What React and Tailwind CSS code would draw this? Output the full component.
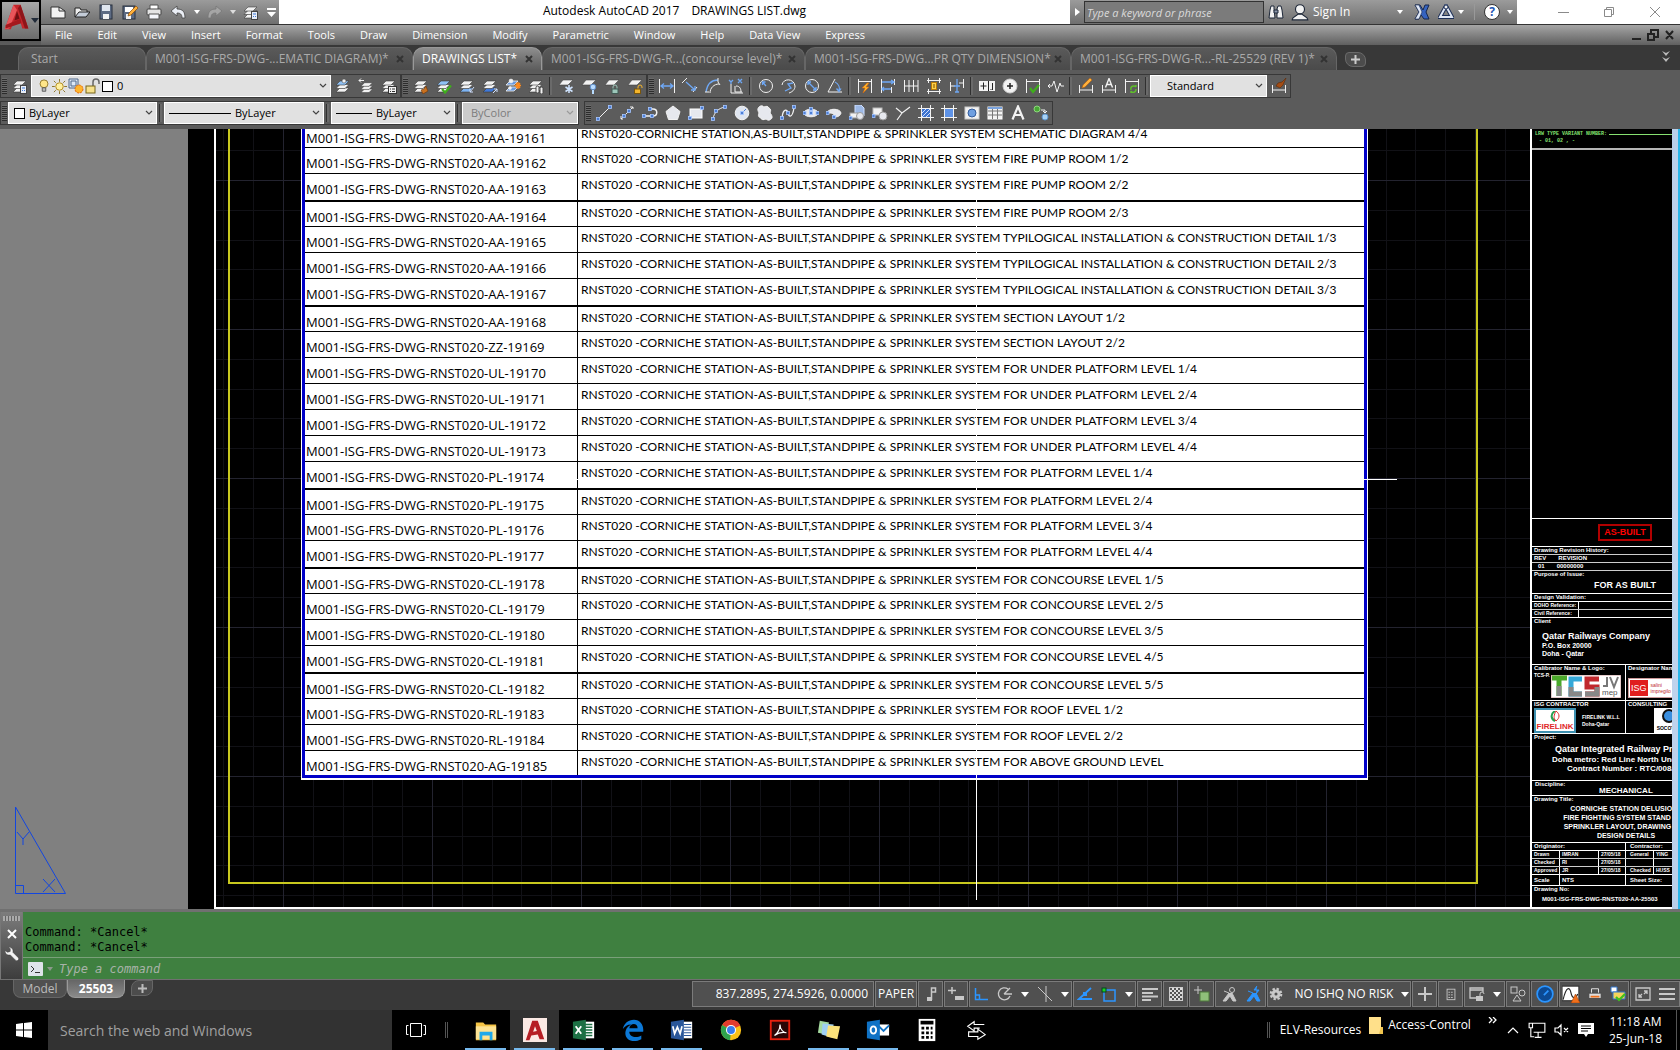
import { useState } from "react";

const menus = [
  "File", "Edit", "View", "Insert", "Format", "Tools", "Draw", "Dimension",
  "Modify", "Parametric", "Window", "Help", "Data View", "Express",
];

const fileTabs = [
  { name: "Start", width: "w-[128px]", pinned: true },
  { name: "M001-ISG-FRS-DWG-...EMATIC DIAGRAM)*", width: "w-[267px]" },
  { name: "DRAWINGS LIST*", width: "w-[129px]" },
  { name: "M001-ISG-FRS-DWG-R...(concourse level)*", width: "w-[263px]" },
  { name: "M001-ISG-FRS-DWG...PR QTY DIMENSION*", width: "w-[266px]" },
  { name: "M001-ISG-FRS-DWG-R...-RL-25529 (REV 1)*", width: "w-[266px]" },
];

const PREFIX = "RNST020 -CORNICHE STATION-AS-BUILT,STANDPIPE & SPRINKLER SYSTEM ";

// heavy marks the rows that close a group with a thicker rule
const drawings = [
  { no: "AA-19161", title: "RNST020-CORNICHE STATION,AS-BUILT,STANDPIPE & SPRINKLER SYSTEM SCHEMATIC DIAGRAM 4/4" },
  { no: "AA-19162", title: PREFIX + "FIRE PUMP ROOM 1/2" },
  { no: "AA-19163", title: PREFIX + "FIRE PUMP ROOM 2/2", heavy: true },
  { no: "AA-19164", title: PREFIX + "FIRE PUMP ROOM 2/3" },
  { no: "AA-19165", title: PREFIX + "TYPILOGICAL INSTALLATION & CONSTRUCTION DETAIL 1/3" },
  { no: "AA-19166", title: PREFIX + "TYPILOGICAL INSTALLATION & CONSTRUCTION DETAIL 2/3" },
  { no: "AA-19167", title: PREFIX + "TYPILOGICAL INSTALLATION & CONSTRUCTION DETAIL 3/3", heavy: true },
  { no: "AA-19168", title: PREFIX + "SECTION LAYOUT 1/2" },
  { no: "ZZ-19169", title: PREFIX + "SECTION LAYOUT 2/2" },
  { no: "UL-19170", title: PREFIX + "FOR UNDER PLATFORM LEVEL 1/4" },
  { no: "UL-19171", title: PREFIX + "FOR UNDER PLATFORM LEVEL 2/4" },
  { no: "UL-19172", title: PREFIX + "FOR UNDER PLATFORM LEVEL 3/4" },
  { no: "UL-19173", title: PREFIX + "FOR UNDER PLATFORM LEVEL 4/4" },
  { no: "PL-19174", title: PREFIX + "FOR PLATFORM LEVEL 1/4", heavy: true },
  { no: "PL-19175", title: PREFIX + "FOR PLATFORM LEVEL 2/4" },
  { no: "PL-19176", title: PREFIX + "FOR PLATFORM LEVEL 3/4" },
  { no: "PL-19177", title: PREFIX + "FOR PLATFORM LEVEL 4/4", heavy: true },
  { no: "CL-19178", title: PREFIX + "FOR CONCOURSE LEVEL 1/5" },
  { no: "CL-19179", title: PREFIX + "FOR CONCOURSE LEVEL 2/5" },
  { no: "CL-19180", title: PREFIX + "FOR CONCOURSE LEVEL 3/5" },
  { no: "CL-19181", title: PREFIX + "FOR CONCOURSE LEVEL 4/5", heavy: true },
  { no: "CL-19182", title: PREFIX + "FOR CONCOURSE LEVEL 5/5" },
  { no: "RL-19183", title: PREFIX + "FOR ROOF LEVEL 1/2" },
  { no: "RL-19184", title: PREFIX + "FOR ROOF LEVEL 2/2" },
  { no: "AG-19185", title: PREFIX + "FOR ABOVE GROUND LEVEL" },
];

/* ---------- ICON PIECES ---------- */

const W = "#f2f2f2";
const B = "#6fa8f5";

function Svg({ size = 16, children }) {
  return (
    <svg width={size} height={size} viewBox="0 0 16 16" fill="none" stroke={W} aria-hidden="true" className="shrink-0">
      {children}
    </svg>
  );
}

function Stack({ top = W, bottom = W }) {
  return (
    <g stroke="#3a3a3a" strokeWidth=".6">
      <path d="M5 10h9l-4 4H1z" fill={bottom} />
      <path d="M5 6.500h9l-4 4H1z" fill={W} />
      <path d="M5 3h9l-4 4H1z" fill={top} />
    </g>
  );
}

function Nodes({ at }) {
  return at.map(([x, y]) => (
    <rect key={x + "-" + y} x={x - 1.5} y={y - 1.5} width="3" height="3" fill="#4d7fd6" stroke="#a9c8ff" strokeWidth=".8" />
  ));
}

const HDim = () => <path d="M1.500 7v8M14.500 7v8M1.500 12h13" />;

const layerProps = (
  <>
    <Stack />
    <rect x="8.500" y="7.500" width="6" height="8" fill="#e8eef8" stroke="#444" />
    <path d="M10 10h3M10 12.500h1M12 12.500h1" stroke="#3b78d8" />
  </>
);

const layerTools = [
  ["Make object's layer current", <><Stack top="#8fc1f5" /><circle cx="9" cy="3" r="2" fill={W} stroke="#444" strokeWidth=".5" /></>],
  ["Layer previous", <><g transform="translate(2 2) scale(.9)"><Stack /></g><path d="M6 2.500H1M3 .5l-2 2 2 2" /></>],
  ["Layer states manager", <><Stack /><rect x="7.500" y="8.500" width="8" height="7" fill={W} stroke="#333" /><path d="M9 11h1M11 11h3M9 13.500h1M11 13.500h3" stroke="#333" /></>],
];

const layerTools2 = [
  ["Match layer", <><Stack /><path d="M13 8l-2 3-3 1 2 4 5-3-1-2z" fill="#c8701e" stroke="#6b3408" strokeWidth=".6" /></>],
  ["Layer current", <><Stack top="#8fc1f5" /><path d="M6 11l3 3.500 6-7" stroke="#3fae1c" strokeWidth="2.200" /></>],
  ["Layer isolate", <><Stack bottom="#7db2f0" /><path d="M15 9l-4 5M11 11v3h3" stroke="#cfe0ff" /></>],
  ["Layer unisolate", <><Stack bottom="#3f78d8" /><path d="M11 15l4-4M12 11h3v3" stroke="#cfe0ff" /></>],
  ["Layer freeze viewport", <><path d="M5 3h8l-4 4H1zM5 9h8l-4 4H1z" fill="#6a9be0" stroke={W} strokeWidth=".8" /><circle cx="6" cy="3" r="2" fill={W} strokeWidth=".5" /><circle cx="5" cy="10" r="1.500" fill={W} strokeWidth=".5" /><path d="M13 4v7M9.500 7.500h7M11 5l4 5M15 5l-4 5" stroke="#ff8a1c" strokeWidth="1.300" /></>],
  ["Layer walk", <><Stack /><rect x="8" y="8" width="3" height="7" rx="1.500" fill={W} stroke="#444" /><rect x="12" y="9" width="3" height="7" rx="1.500" fill={W} stroke="#444" /></>],
];

const flat = <path d="M5 2h10l-5 5H1z" fill={W} stroke="#444" strokeWidth=".6" />;
const layerTools3 = [
  ["Layer freeze", <>{flat}<path d="M11 7v8M7.500 9l7 4.500M14.500 9l-7 4.500" stroke="#cfe4ff" strokeWidth="1.500" /></>],
  ["Layer off", <>{flat}<circle cx="12" cy="9" r="2.800" fill="#b9dcff" stroke="#5d8cc9" /><path d="M12 12v4" stroke="#b9dcff" strokeWidth="2" /></>],
  ["Layer lock", <>{flat}<path d="M9 11V9a2 2 0 014 0v2" stroke="#9cc7ba" /><rect x="8" y="11" width="6" height="4.500" fill="#9cc7ba" stroke="#415b54" /></>],
  ["Layer unlock", <>{flat}<path d="M11 11V9a2 2 0 014 0v1" stroke="#f4b52c" /><rect x="7.500" y="11" width="6" height="4.500" fill="#f4b52c" stroke="#7b560b" /></>],
];

const dimTools = [
  ["Linear", <><path d="M.5 1v14M15.500 1v14" /><path d="M2 8h12M5 5.500L2 8l3 2.500M11 5.500L14 8l-3 2.500" stroke={B} strokeWidth="1.300" /></>],
  ["Aligned", <><path d="M5 0L0 5M15 9l-4 5" /><path d="M4 4l9 8M13 8v4H9" stroke={B} strokeWidth="1.300" /></>],
  ["Arc length", <><path d="M5 15c0-5 4-9 9-9" /><path d="M1 14C2 7 6 2 13 2" stroke={B} strokeWidth="1.300" /><path d="M0 14h4M13 0v4M13 4l2 3" /></>],
  ["Ordinate", <><path d="M3 6v9h12M7 8v6h7M8 8c4 0 5 3 5 6" /><path d="M10 1l4 4M14 1l-4 4M1 2l2 2 2-2M3 4v2" stroke={B} strokeWidth="1.300" /></>],
];
const dimTools2 = [
  ["Radius", <><circle cx="8" cy="8" r="6.500" /><path d="M8 8L4.500 4M4.500 7V4h3" stroke={B} strokeWidth="1.300" /></>],
  ["Jogged", <><path d="M1 7c1-7 12-7 13 1 0 4-3 6-6 7" /><path d="M12 5L7 6l3 4-6 3" stroke={B} strokeWidth="1.300" /></>],
  ["Diameter", <><circle cx="8" cy="8" r="6.500" /><path d="M4 4l8 8M4 7V4h3M12 9v3H9" stroke={B} strokeWidth="1.300" /></>],
  ["Angular", <><path d="M8 1L1 14h14" /><path d="M8 4c4 2 5 6 4 9M9.500 10.500l2.500 3 2-3" stroke={B} strokeWidth="1.300" /></>],
];
const dimTools3 = [
  ["Quick dimension", <><path d="M1.500 1v14M14.500 1v14M1 3.500h14" /><path d="M10 5L5 10h3l-2 5 6-6H9l3-4z" fill="#ffb52c" stroke="#d5660c" strokeWidth=".6" /></>],
  ["Baseline", <><path d="M1.500 1v14M11.500 9v6M14.500 1v6" /><path d="M2 4h12M2 11h9M11 2l3 2-3 2M4 9l-2 2 2 2" stroke={B} strokeWidth="1.300" /></>],
  ["Continue", <path d="M1.500 2v12M6 2v12M10.500 2v12M15 2v12M1 8h14" />],
  ["Dimension space", <><path d="M1 2.500h14M1 13.500h14M2.500 0v5M13.500 0v5M2.500 11v5M13.500 11v5" /><rect x="5.500" y="4.500" width="5" height="7" fill="#ffd24a" stroke="#b97a05" /><path d="M8 6v4" stroke="#7a4c00" /></>],
  ["Dimension break", <><path d="M1.500 4v9M14.500 1v9M2 8h4M10 5h4" /><path d="M8 1v13M5 8h6M6 14h4" stroke={B} strokeWidth="1.300" /></>],
];
const dimTools4 = [
  ["Tolerance", <><rect x="0" y="3" width="16" height="10" fill={W} stroke="none" /><path d="M4.500 4.500v7M1.500 8h6M9.500 3v10M12 11v1M13.500 5v7" stroke="#222" /></>],
  ["Center mark", <><circle cx="8" cy="8" r="7" fill={W} stroke="#ccc" /><path d="M8 5v6M5 8h6" stroke="#222" strokeWidth="1.500" /></>],
  ["Inspection", <><path d="M1.500 1v14M14.500 1v14M2 3.500h12" /><path d="M5 10l3 4 6-7" stroke="#3fae1c" strokeWidth="2.200" /></>],
  ["Jogged linear", <path d="M0 8h4l2-5 3 11 3-9 1 3h3M2 6L0 8l2 2" />],
];
const dimTools5 = [
  ["Dimension edit", <><HDim /><path d="M12 0L5 7l-1 3 3-1 7-7z" fill="#ffb13c" stroke="#b8600a" strokeWidth=".6" /></>],
  ["Dimension text edit", <><HDim /><path d="M4.500 9.500L8 .5l3.500 9M5.500 6.500h5" strokeWidth="1.400" /></>],
  ["Dimension update", <><path d="M1.500 1v14M14.500 1v14M2 3.500h12" /><path d="M7 12c-1-4 3-5 5-3M12 9v-2M12 11c0 4-4 4-5 2M7 13v2" stroke="#5fbf2a" strokeWidth="1.400" /></>],
];
const dimStyle = <><HDim /><path d="M15 0l-4 4-4 1-2 3 4 2 3-3z" fill="#a34d16" stroke="#5e2a07" strokeWidth=".6" /></>;

const drawTools = [
  ["Line", <><path d="M2 14L14 2" /><Nodes at={[[2, 14], [14, 2]]} /></>],
  ["Construction line", <><path d="M2 14L14 2M11 2h3v3M2 11v3h3" strokeDasharray="5 2" /><Nodes at={[[10, 6], [5, 11]]} /></>],
  ["Polyline", <><path d="M2 11h9c5 0 5-7 0-7H8" strokeWidth="1.500" /><Nodes at={[[2, 11], [10, 11], [8, 4]]} /></>],
  ["Polygon", <path d="M8 1l7 5.500-2.500 8h-9L1 6.500z" fill="#e6e8ee" />],
  ["Rectangle", <><rect x="2" y="4" width="12" height="9" fill="#e6e8ee" stroke="#fff" /><Nodes at={[[2, 13], [14, 3]]} /></>],
  ["Arc", <><path d="M2 14C3 7 8 3 14 2" /><Nodes at={[[2, 14], [5, 6], [14, 2]]} /></>],
  ["Circle", <><circle cx="8" cy="8" r="6.800" fill="#dfe5f0" /><path d="M8 8l4-4" stroke="#4d7fd6" /><Nodes at={[[8, 8]]} /></>],
  ["Revision cloud", <path d="M2 2c2-2 4-1 5 0 2-1 4-1 5 1 2 1 2 3 1 5 2 2 3 5 1 6-2 2-4 1-5 0-2 1-5 1-5-1-3-1-3-3-2-5-1-2-2-4 0-6z" fill="#e6e8ee" />],
  ["Spline", <><path d="M2 13C3 2 8 5 8 8s4 7 6-5" strokeWidth="1.300" /><Nodes at={[[2, 13], [8, 8], [14, 2]]} /></>],
  ["Ellipse", <><ellipse cx="8" cy="8" rx="7" ry="3.800" fill="#e6e8ee" /><Nodes at={[[1.5, 8], [8, 4], [14.500, 8], [8, 8]]} /></>],
  ["Ellipse arc", <><path d="M1 8c1-5 13-5 14 0-1 4-5 4-7 4 1-2-1-4-4-4z" fill="#e6e8ee" /><Nodes at={[[1.5, 8], [8, 12]]} /></>],
  ["Insert block", <><path d="M6 0h6l3 3v8H6z" fill="#9db9e6" stroke="#cfe0ff" /><rect x="1" y="8" width="8" height="5" fill={W} stroke="#999" /><circle cx="11" cy="11" r="3.500" fill="#e6e8ee" stroke="#999" /><Nodes at={[[1.500, 13]]} /></>],
  ["Make block", <><rect x="1" y="3" width="9" height="7" fill={W} stroke="#bbb" /><circle cx="11" cy="11" r="4" fill="#e6e8ee" stroke="#999" /><Nodes at={[[1.500, 11]]} /></>],
  ["Point", <path d="M1 3l6 5 8-6M7 8l-5 7" strokeWidth="1.200" />],
  ["Hatch", <><path d="M3.500 0v16M12.500 0v16M0 3.500h16M0 12.500h16" /><rect x="4" y="4" width="8" height="8" fill="#3d73cf" stroke="none" /><path d="M4 8l4-4M4 12l8-8M8 12l4-4" stroke="#cfe0ff" /></>],
  ["Gradient", <><path d="M3.500 0v16M12.500 0v16M0 3.500h16M0 12.500h16" /><rect x="4" y="4" width="8" height="8" fill="#5e93e8" stroke="none" /></>],
  ["Region", <><rect x="1" y="2" width="14" height="12" fill={W} stroke="#ccc" /><circle cx="8" cy="8" r="4" fill="#6f9fe0" stroke="#335c9c" /></>],
  ["Table", <><rect x="1" y="2" width="14" height="12" fill={W} stroke="#fff" /><path d="M1 6h14M1 10h14M5.500 3v11M10.500 3v11" stroke="#777" /><path d="M1 3h14" stroke="#7ba4df" strokeWidth="2" /></>],
  ["Multiline text", <path d="M2.500 14.500L8 1.500l5.500 13M4.500 10h7" strokeWidth="2.200" />],
  ["Add selected", <><circle cx="4" cy="4" r="3" fill="#49a836" stroke="#8fd67f" /><circle cx="12" cy="12" r="3" fill="#a9d2f5" stroke="#5c94cf" /><path d="M8 5h4v3M10 6l2 2 2-2" /></>],
];

/* ---------- SMALL PARTS ---------- */

function Tools({ items }) {
  return items.map(([label, art]) => (
    <button key={label} aria-label={label} className="flex h-full w-[23px] shrink-0 items-center justify-center hover:bg-white/15">
      <Svg>{art}</Svg>
    </button>
  ));
}

function Toolbar({ children, label }) {
  return (
    <div role="toolbar" aria-label={label} className="flex h-6 items-center border border-[#383838] bg-[#5c5c5c]">
      <span className="mx-px h-4 w-[5px] shrink-0 bg-[repeating-linear-gradient(0deg,#2c2c2c_0px,#2c2c2c_1px,#6a6a6a_1px,#6a6a6a_2px)]" />
      {children}
    </div>
  );
}

function Sep() {
  return <span className="mx-[2px] h-[18px] w-[3px] shrink-0 border-l border-[#303030] bg-[#6a6a6a]" />;
}

function Chevron({ muted }) {
  return (
    <svg width="8" height="6" viewBox="0 0 8 6" fill="none" stroke={muted ? "#9a9a9a" : "#444"} strokeWidth="1.200" className="mr-[3px] shrink-0" aria-hidden="true">
      <path d="M1 1l3 3 3-3" />
    </svg>
  );
}

function Combo({ label, value, width, before, pad = "pl-[5px]", disabled }) {
  return (
    <label
      className={`flex h-[22px] shrink-0 items-center gap-1 border border-white ${width} ${pad} ${
        disabled ? "bg-[#cbcbcb] text-[#7d7d7d]" : "bg-[#e1e1e1] text-black"
      }`}
    >
      {before}
      <select aria-label={label} disabled={disabled} className="min-w-0 flex-1 appearance-none bg-transparent text-[11px] leading-4 outline-none">
        <option>{value}</option>
      </select>
      <Chevron muted={disabled} />
    </label>
  );
}

function Caret({ color = "border-t-white" }) {
  return <span className={`h-0 w-0 shrink-0 border-x-4 border-t-[5px] border-x-transparent ${color}`} />;
}

/* ---------- TITLE BAR + MENUS ---------- */

function AppLogo({ size = 32 }) {
  return (
    <svg width={size} height={size} viewBox="0 0 32 32" aria-hidden="true">
      <path d="M12 2h8l9 27h-7l-2-7-9 2-2 6H2z" fill="#c4262b" />
      <path d="M12 2l4 6-9 21-5 1z" fill="#e8555a" />
      <path d="M16 9l3 9-6 2z" fill="#6e1013" />
      <path d="M3 25l17-7 1 5-18 6z" fill="#a5181d" />
      <path d="M20 2l9 27h-4L17 6z" fill="#8e1519" />
    </svg>
  );
}

function QuickAccess() {
  const btn = "flex h-full w-6 items-center justify-center";
  return (
    <div className="flex h-6 w-[238px] items-center bg-gradient-to-b from-[#9b9b9b] to-[#6f6f6f] pl-[5px]">
      <button aria-label="New" className={btn}><Svg><path d="M1 3h8l6 4v7H1z" fill={W} stroke="#333" /><path d="M9 3v4h6" stroke="#333" /></Svg></button>
      <button aria-label="Open" className={btn}><Svg><path d="M1 13V4h5l1 2h6v2" fill="#eee" stroke="#222" /><path d="M1 13l4-5h11l-4 5z" fill="#c4ccd8" stroke="#222" /></Svg></button>
      <button aria-label="Save" className={btn}><Svg><rect x="2" y="1" width="12" height="14" fill="#5d6b83" stroke="#28303e" /><rect x="4" y="1" width="8" height="6" fill="#dfe5ee" stroke="none" /><rect x="5" y="10" width="6" height="5" fill={W} stroke="none" /></Svg></button>
      <button aria-label="Save as" className={btn}><Svg><rect x="1" y="2" width="12" height="13" fill="#5d6b83" stroke="#28303e" /><rect x="3" y="3" width="8" height="5" fill="#fff" stroke="none" /><rect x="4" y="10" width="5" height="5" fill={W} stroke="none" /><path d="M14 2l-7 7-1 3 3-1 7-7z" fill="#ffb13c" stroke="#8a4a06" strokeWidth=".7" /></Svg></button>
      <button aria-label="Plot" className={btn}><Svg><path d="M4 5V1h8v4" fill="#fff" stroke="#555" /><rect x="1" y="5" width="14" height="6" rx="1" fill="#e4e4e4" stroke="#444" /><path d="M3 10h10v5H3z" fill="#f4f6fb" stroke="#555" /></Svg></button>
      <button aria-label="Undo" className={btn}><Svg><path d="M1 7l6-5v3c6 0 8 3 8 9h-3c0-4-2-5-5-5v3z" fill="#eaeef5" stroke="#444" strokeWidth=".8" /></Svg></button>
      <span className="flex w-[13px] justify-center"><svg width="6" height="4" aria-hidden="true"><path d="M0 0h6L3 4z" fill="#fff" /></svg></span>
      <button aria-label="Redo" className={btn}><Svg><path d="M15 7L9 2v3c-6 0-8 3-8 9h3c0-4 2-5 5-5v3z" fill="#a5a5a5" stroke="#777" strokeWidth=".8" /></Svg></button>
      <span className="flex w-[12px] justify-center"><svg width="6" height="4" aria-hidden="true"><path d="M0 0h6L3 4z" fill="#ddd" /></svg></span>
      <button aria-label="Layer properties" className={btn}><Svg>{layerProps}</Svg></button>
      <button aria-label="Customize" className="flex h-full w-4 items-center justify-center">
        <svg width="9" height="9" aria-hidden="true"><path d="M0 0h9v2H0zM0 4h9L4.500 9z" fill="#fff" /></svg>
      </button>
    </div>
  );
}

function InfoCenter() {
  return (
    <div className="flex h-6 w-[447px] items-center bg-gradient-to-b from-[#9b9b9b] to-[#6f6f6f]">
      <button aria-label="Collapse" className="flex h-full w-[14px] items-center justify-center">
        <svg width="5" height="8" aria-hidden="true"><path d="M0 0l5 4-5 4z" fill="#fff" /></svg>
      </button>
      <input aria-label="Search help" placeholder="Type a keyword or phrase" className="h-[22px] w-[180px] border border-[#333] bg-[#7b7b7b] px-[2px] text-[11px] italic text-white outline-none placeholder:text-[#dadada]" />
      <button aria-label="Search" className="ml-[3px] flex w-[18px] justify-center">
        <Svg><path d="M3 2h3v3l1 9H1L2 6zM10 2h3l1 4 1 8H9V5z" fill={W} stroke="#1d2738" /><path d="M6 6h4v3H6z" fill="#8c97ab" stroke="#1d2738" /></Svg>
      </button>
      <button className="ml-[6px] flex items-center gap-1 text-[12px] text-white">
        <Svg size={18}><circle cx="8" cy="5.500" r="4" fill={W} stroke="#1d2738" /><path d="M1 15c0-3 4-3 5-5h4c1 2 5 2 5 5z" fill={W} stroke="#1d2738" /></Svg>
        Sign In
      </button>
      <span className="flex-1" />
      <svg width="6" height="4" aria-hidden="true"><path d="M0 0h6L3 4z" fill="#fff" /></svg>
      <button aria-label="Exchange" className="ml-[11px]"><Svg><path d="M1 1h5l3 5 2-5h4l-3 7 3 7h-5l-3-4-2 4H1l4-7z" fill="#3563c0" stroke="#16264b" /><path d="M1 1h4l3 7-3 7H1l4-7z" fill="#dfe7f5" stroke="#16264b" strokeWidth=".6" /></Svg></button>
      <button aria-label="A360" className="ml-2"><Svg><path d="M8 2L2 13h12z" stroke="#1d2f57" strokeWidth="4" /><path d="M8 2L2 13h12z" stroke="#dfe7f5" strokeWidth="2" /><circle cx="8" cy="3" r="2" fill={W} stroke="#1d2f57" /></Svg></button>
      <svg width="6" height="4" className="ml-1" aria-hidden="true"><path d="M0 0h6L3 4z" fill="#fff" /></svg>
      <span className="ml-[10px] h-4 w-px bg-[#999]" />
      <button aria-label="Help" className="ml-[9px] flex h-4 w-4 items-center justify-center rounded-full border border-[#333] bg-white text-[12px] font-bold leading-4 text-[#1f56b5]">?</button>
      <svg width="6" height="4" className="mr-1 ml-[7px]" aria-hidden="true"><path d="M0 0h6L3 4z" fill="#fff" /></svg>
    </div>
  );
}

function Header() {
  return (
    <header className="flex h-[45px] shrink-0 bg-gradient-to-b from-[#3a3a3a] to-[#5c5c5c]">
      <button aria-label="Application menu" className="flex h-[41px] w-[41px] shrink-0 items-center justify-center border-2 border-black bg-gradient-to-b from-[#a8a8a8] to-[#6c6c6c]">
        <span className="pb-2"><AppLogo size={28} /></span>
        <Caret color="border-t-[#222c3a]" />
      </button>
      <div className="min-w-0 flex-1">
        <div className="flex h-[25px] border-b border-[#333] bg-white">
          <QuickAccess />
          <h1 className="flex flex-1 items-center justify-center gap-3 pb-[2px] text-[12px] whitespace-nowrap text-black">
            <span>Autodesk AutoCAD 2017</span>
            <span>DRAWINGS LIST.dwg</span>
          </h1>
          <InfoCenter />
          <div className="flex w-[163px] items-center justify-between pr-[19px] pl-[41px] text-[#8a8a8a]">
            <button aria-label="Minimize"><svg width="11" height="12" stroke="currentColor" fill="none"><path d="M0 6.500h11" /></svg></button>
            <button aria-label="Restore"><svg width="12" height="12" stroke="currentColor" fill="none"><path d="M1.500 3.500h7v7h-7zM3.500 3.500v-2h7v7h-2" /></svg></button>
            <button aria-label="Close"><svg width="12" height="12" stroke="currentColor" fill="none"><path d="M1 1l10 10M11 1L1 11" /></svg></button>
          </div>
        </div>
        <nav className="flex h-5 items-center bg-gradient-to-b from-[#a6a6a6] to-[#606060] pl-[14px]">
          <div className="flex flex-1 gap-[25px] text-[11px] leading-4 text-white">
            {menus.map((m) => (
              <button key={m}>{m}</button>
            ))}
          </div>
          <svg width="44" height="12" fill="none" stroke="#222" strokeWidth="2" className="mr-[5px]" aria-hidden="true">
            <path d="M1 10h9M17 5h6v6h-6zM20 4V1h7v7h-3M35 2l7 8M42 2l-7 8" />
          </svg>
        </nav>
      </div>
    </header>
  );
}

/* ---------- FILE TABS ---------- */

function FileTabs({ active, onPick }) {
  return (
    <div className="flex h-[25px] shrink-0 items-end bg-[#383838] pl-[18px] text-[12px]">
      {fileTabs.map((tab) => {
        const on = tab.name === active;
        return (
          <div
            key={tab.name}
            className={`flex h-[23px] shrink-0 items-center justify-between rounded-t-[10px] border-x border-t pr-2 ${tab.width} ${
              tab.pinned ? "pl-3" : "pl-2"
            } ${
              on
                ? "border-[#999] bg-gradient-to-b from-[#8e8e8e] to-[#5c5c5c] text-white"
                : "border-[#666] bg-gradient-to-b from-[#5a5a5a] to-[#4a4a4a] text-[#aaa]"
            }`}
          >
            <button onClick={() => onPick(tab.name)} className="leading-5 whitespace-nowrap">{tab.name}</button>
            {!tab.pinned && (
              <button aria-label={"Close " + tab.name} className="shrink-0">
                <svg width="8" height="8" stroke="#333" strokeWidth="2" aria-hidden="true"><path d="M1 1l6 6M7 1L1 7" /></svg>
              </button>
            )}
          </div>
        );
      })}
      <button aria-label="New tab" className="mb-[3px] ml-2 flex h-[15px] w-[21px] items-center justify-center rounded-tl-sm rounded-tr-lg rounded-br-sm rounded-bl-lg border border-[#6a6a6a] bg-[#4c4c4c]">
        <svg width="9" height="9" stroke="#ccc" strokeWidth="2" aria-hidden="true"><path d="M4.500 0v9M0 4.500h9" /></svg>
      </button>
      <span className="flex-1" />
      <svg width="8" height="12" fill="#bbb" className="mr-[10px] mb-[7px]" aria-hidden="true"><path d="M0 0l4 2 4-2-4 5zM0 6l4 2 4-2-4 5z" /></svg>
    </div>
  );
}

/* ---------- TOOLBARS ---------- */

function Toolbars() {
  const layerState = (
    <span className="flex items-center gap-[1px]">
      <Svg size={14}><circle cx="8" cy="5.500" r="4.500" fill="#ffe68a" stroke="#8a7020" /><path d="M6 10h4v4H6z" fill="#bbb" stroke="#555" /></Svg>
      <Svg size={15}><circle cx="8" cy="8" r="4" fill="#fff0a0" stroke="#b08818" /><path d="M8 0v3M8 13v3M0 8h3M13 8h3M2 2l2 2M12 12l2 2M14 2l-2 2M4 12l-2 2" stroke="#8a7020" /></Svg>
      <Svg size={16}><path d="M1 1h9v9H1z" stroke="#4f6788" fill="#dde8f6" /><path d="M3 3h5v5H3z" stroke="#4f6788" /><circle cx="11" cy="11" r="4" fill="#ffb52c" stroke="#e0640c" strokeDasharray="2 1" /></Svg>
      <Svg size={16}><path d="M8 8V4a3 3 0 016 0v2" stroke="#666" strokeWidth="1.500" /><rect x="1" y="8" width="9" height="7" fill="#f7e18b" stroke="#77651b" /></Svg>
      <span className="h-[11px] w-[11px] border border-black bg-white" />
    </span>
  );
  return (
    <div className="flex h-[59px] shrink-0 flex-col gap-[3px] bg-[#5b5b5b] pt-1 text-[12px]">
      <div className="flex">
        <Toolbar label="Layers">
          <Tools items={[["Layer properties manager", layerProps]]} />
          <Combo label="Layer" value="0" width="w-[300px]" before={layerState} />
          <Tools items={layerTools} />
        </Toolbar>
        <Toolbar label="Layer tools">
          <Tools items={layerTools2} />
          <Sep />
          <Tools items={layerTools3} />
        </Toolbar>
        <Toolbar label="Dimension">
          <Tools items={dimTools} />
          <Sep />
          <Tools items={dimTools2} />
          <Sep />
          <Tools items={dimTools3} />
          <Sep />
          <Tools items={dimTools4} />
          <Sep />
          <Tools items={dimTools5} />
          <Sep />
          <Combo label="Dimension style" value="Standard" width="w-[117px]" pad="pl-[16px]" />
          <Tools items={[["Dimension style manager", dimStyle]]} />
        </Toolbar>
      </div>
      <div className="flex gap-[5px]">
        <Toolbar label="Properties">
          <Combo label="Color" value="ByLayer" width="w-[149px]" before={<span className="h-[11px] w-[11px] border border-black bg-white" />} />
          <Sep />
          <Combo label="Linetype" value="ByLayer" width="w-[160px]" pad="pl-1" before={<span className="h-px w-[62px] bg-black" />} />
          <Sep />
          <Combo label="Lineweight" value="ByLayer" width="w-[124px]" pad="pl-1" before={<span className="h-px w-[36px] bg-black" />} />
          <Sep />
          <Combo label="Plot style" value="ByColor" width="w-[116px]" pad="pl-2" disabled />
        </Toolbar>
        <Toolbar label="Draw">
          <Tools items={drawTools} />
        </Toolbar>
      </div>
    </div>
  );
}

/* ---------- DRAWING AREA ---------- */

function GridLines() {
  return (
    <svg className="absolute inset-0 h-full w-full" aria-hidden="true">
      <defs>
        <pattern id="grid" width="149" height="149" x="67" y="51" patternUnits="userSpaceOnUse">
          <path d="M30.500 0v149M60.500 0v149M89.500 0v149M119.500 0v149M0 30.500h149M0 60.500h149M0 89.500h149M0 119.500h149" stroke="#111116" />
          <path d="M.5 0v149M0 .5h149" stroke="#23232f" />
        </pattern>
      </defs>
      <rect width="100%" height="100%" fill="url(#grid)" />
    </svg>
  );
}

function DrawingTable() {
  return (
    <div className="mr-[108px] mb-[102px] ml-[71px] border-x border-b-2 border-white bg-white">
      <table className="w-full table-fixed border-collapse border-[3px] border-[#0000c8] bg-white text-black">
        <colgroup>
          <col className="w-[274px]" />
          <col />
        </colgroup>
        <tbody>
          {drawings.map((d) => (
            <tr key={d.no} className={d.heavy ? "h-[27px] border-b-2 border-black" : "h-[26px] border-b border-black"}>
              <td className="overflow-hidden border-r border-black pt-[6px] pl-px align-top text-[13px] leading-[18px] whitespace-nowrap">
                M001-ISG-FRS-DWG-RNST020-{d.no}
              </td>
              <td className="overflow-hidden pt-[2px] pl-[3px] align-top font-['Lato',sans-serif] text-[12px] leading-[18px] whitespace-nowrap">
                {d.title}
              </td>
            </tr>
          ))}
        </tbody>
      </table>
    </div>
  );
}

function TitleBlock() {
  const label = "text-[6px] leading-[7px] font-bold";
  const tiny = "text-[5px] leading-[7px] font-bold";
  return (
    <aside className="relative flex w-[142px] shrink-0 flex-col overflow-hidden border-l-2 border-white bg-black font-['Liberation_Sans',sans-serif] whitespace-nowrap text-white">
      <div className="h-[21px] border-b-2 border-[#b5b5b5] pt-[2px] pl-[3px] font-['Liberation_Mono',monospace] text-[5px] leading-[7px] font-bold text-[#86e070]">
        <p className="flex items-center gap-[2px]">LRW TYPE VARIANT NUMBER:<span className="h-px flex-1 bg-[#86e070]" /></p>
        <p className="pl-1">- 01, 02 , -</p>
      </div>
      <div className="flex-1" />
      <div className="flex h-[29px] items-center justify-center border-y border-white pl-[46px]">
        <span className="border-2 border-[#b00000] px-[4px] text-[9px] leading-[13px] font-bold text-[#ff0000]">AS-BUILT</span>
      </div>
      <div className="flex h-[8px] items-center border-b border-[#ccc] pl-[2px]"><p className={label}>Drawing Revision History:</p></div>
      <div className="flex h-[8px] items-center gap-3 border-b border-[#ccc] pl-[2px]"><p className={label}>REV</p><p className={label}>REVISION</p></div>
      <div className="flex h-[8px] items-center gap-3 border-b border-[#ccc] pl-[6px]"><p className={label}>01</p><p className={label}>00000000</p></div>
      <div className="h-[23px] border-b border-white pl-[2px]">
        <p className={label}>Purpose of Issue:</p>
        <p className="pl-[60px] text-[9px] leading-[14px] font-bold">FOR AS BUILT</p>
      </div>
      <div className="flex h-[8px] items-center border-b border-white pl-[2px]"><p className={label}>Design Validation:</p></div>
      <div className="flex h-[8px] items-center border-b border-[#ccc] pl-[2px]"><p className={tiny + " w-[45px] border-r"}>DOHO Reference:</p></div>
      <div className="flex h-[8px] items-center border-b border-white pl-[2px]"><p className={tiny + " w-[45px] border-r"}>Civil Reference:</p></div>
      <div className="h-[47px] border-b border-white pl-[2px]">
        <p className={label}>Client</p>
        <div className="pt-[5px] pl-[8px] font-bold">
          <p className="text-[9px] leading-[12px]">Qatar Railways Company</p>
          <p className="text-[7px] leading-[8px]">P.O. Box 20000</p>
          <p className="text-[7px] leading-[8px]">Doha - Qatar</p>
        </div>
      </div>
      <div className="flex h-[36px] border-b border-white">
        <div className="w-[94px] shrink-0 border-r border-white pl-[2px]">
          <p className={label}>Calibrator Name & Logo:</p>
          <div className="flex items-start">
            <p className={tiny + " w-[17px] shrink-0"}>TCS-P.</p>
            <svg width="70" height="23" viewBox="0 0 70 23" className="mt-[3px] shrink-0" aria-label="TCS JV mep">
              <rect width="70" height="23" fill="#fff" stroke="#c99" />
              <path d="M1 3h15M8 3v18" stroke="#4aa82b" strokeWidth="5" fill="none" />
              <path d="M8 11v10" stroke="#888" strokeWidth="5" />
              <path d="M31 4H20v15h11" stroke="#35a8d8" strokeWidth="5" fill="none" />
              <path d="M20 12v7h11" stroke="#888" strokeWidth="5" fill="none" />
              <path d="M48 4H36v8h10v7H34" stroke="#c0282d" strokeWidth="5" fill="none" />
              <path d="M46 12v7H34" stroke="#888" strokeWidth="5" fill="none" />
              <path d="M56 2v9h-4M59 2l4 10 4-10" stroke="#777" strokeWidth="2" fill="none" />
              <text x="51" y="20" fontSize="8" fill="#555" stroke="none">mep</text>
            </svg>
          </div>
        </div>
        <div className="flex-1 overflow-hidden pl-[2px]">
          <p className={label}>Designator Name & Logo:</p>
          <div className="mt-[6px] flex h-[20px] w-[60px] items-center gap-[3px] border border-[#c99] bg-white pl-[1px] text-[#c0282d]">
            <span className="bg-[#e01e1e] px-[1px] text-[9px] leading-[16px] text-white">ISG</span>
            <span className="text-[5px] leading-[6px]">salini<br />impregilo</span>
          </div>
        </div>
      </div>
      <div className="flex h-[33px] border-b border-white">
        <div className="w-[94px] shrink-0 border-r border-white pl-[2px]">
          <p className={label}>ISG CONTRACTOR</p>
          <div className="flex items-center gap-[6px]">
            <div className="flex h-[25px] w-[42px] shrink-0 flex-col items-center justify-end border-2 border-[#3d90b0] bg-white text-[8px] leading-[9px] font-bold text-[#e02a2a]">
              <svg width="12" height="11" viewBox="0 0 12 11" fill="none" aria-hidden="true"><path d="M6 0C1 3 2 8 6 10" stroke="#28a050" strokeWidth="2" /><path d="M7 0c4 3 4 7 0 10-3-3-2-6 0-10z" stroke="#e02a2a" /></svg>
              FIRELINK
            </div>
            <div className={tiny}><p>FIRELINK W.L.L</p><p>Doha-Qatar</p></div>
          </div>
        </div>
        <div className="flex-1 overflow-hidden pl-[2px]">
          <p className={label}>CONSULTING</p>
          <div className="ml-[26px] flex h-[25px] w-[30px] flex-col items-center bg-white text-[5px] leading-[6px] font-bold text-black">
            <svg width="18" height="17" viewBox="0 0 18 17" aria-hidden="true"><circle cx="9" cy="8" r="6" fill="#3a8fe0" stroke="#111" strokeWidth="2" /></svg>
            SOCOTEC
          </div>
        </div>
      </div>
      <div className="h-[47px] border-b border-white pl-[2px] font-bold">
        <p className={label}>Project:</p>
        <p className="pt-[2px] pl-[21px] text-[9px] leading-[12px]">Qatar Integrated Railway Project</p>
        <p className="pl-[18px] text-[8px] leading-[9px]">Doha metro: Red Line North Underground</p>
        <p className="pl-[33px] text-[8px] leading-[9px]">Contract Number : RTC/008/2012</p>
      </div>
      <div className="h-[15px] border-b border-white pl-[3px]">
        <p className={label}>Discipline:</p>
        <p className="pl-[64px] text-[8px] leading-[5px] font-bold">MECHANICAL</p>
      </div>
      <div className="h-[47px] border-b border-white pl-[2px]">
        <p className={label}>Drawing Title:</p>
        <div className="flex w-[184px] flex-col items-center pt-px text-[7px] leading-[9px] font-bold">
          <p>CORNICHE STATION DELUSIONS</p>
          <p>FIRE FIGHTING SYSTEM STAND PIPE</p>
          <p>SPRINKLER LAYOUT, DRAWING LIST</p>
          <p>DESIGN DETAILS</p>
        </div>
      </div>
      <div className="flex h-[8px] items-center border-b border-white"><p className={label + " w-[94px] border-r pl-[2px]"}>Originator:</p><p className={label + " pl-1"}>Contractor:</p></div>
      <div className="flex h-[8px] border-b border-[#ccc]"><p className={tiny + " w-[28px] border-r pl-[2px]"}>Drawn</p><p className={tiny + " w-[39px] border-r pl-[2px]"}>IMRAN</p><p className={tiny + " w-[27px] border-r pl-[2px]"}>27/05/18</p><p className={tiny + " w-[28px] border-r pl-1"}>General</p><p className={tiny + " pl-[2px]"}>YING</p></div>
      <div className="flex h-[8px] border-b border-[#ccc]"><p className={tiny + " w-[28px] border-r pl-[2px]"}>Checked</p><p className={tiny + " w-[39px] border-r pl-[2px]"}>RI</p><p className={tiny + " w-[27px] border-r pl-[2px]"}>27/05/18</p><p className={tiny + " w-[28px] border-r pl-1"}></p></div>
      <div className="flex h-[8px] border-b border-white"><p className={tiny + " w-[28px] border-r pl-[2px]"}>Approved</p><p className={tiny + " w-[39px] border-r pl-[2px]"}>JR</p><p className={tiny + " w-[27px] border-r pl-[2px]"}>27/05/18</p><p className={tiny + " w-[28px] border-r pl-1"}>Checked</p><p className={tiny + " pl-[2px]"}>HUSS</p></div>
      <div className="flex h-[11px] border-b border-white"><p className={label + " w-[28px] border-r pl-[2px] pt-[2px]"}>Scale</p><p className={label + " w-[66px] border-r pl-[2px] pt-[2px]"}>NTS</p><p className={label + " pl-1 pt-[2px]"}>Sheet Size:</p></div>
      <div className="h-[21px] pl-[2px]">
        <p className={label}>Drawing No:</p>
        <p className="pt-[2px] pl-[8px] text-[6px] leading-[9px] font-bold">M001-ISG-FRS-DWG-RNST020-AA-25503</p>
      </div>
    </aside>
  );
}

function Canvas() {
  return (
    <main className="relative flex min-h-0 flex-1 overflow-hidden bg-black">
      <div className="flex w-[188px] shrink-0 items-end bg-[#808080] pb-[14px] pl-[14px]">
        <svg width="54" height="90" viewBox="0 0 54 90" fill="none" stroke="#1246e0" aria-label="UCS icon">
          <path d="M1.500 2v86.500h50zM1.500 80.500h8v8M3 27l6 7 6-7M9 34v6M29 74l12 13M41 74L29 87" />
        </svg>
      </div>
      <div className="relative ml-[26px] flex min-w-0 flex-1 border-b-2 border-l-2 border-white">
        <GridLines />
        <div className="relative mr-[52px] mb-[23px] ml-[12px] flex min-w-0 flex-1 flex-col justify-end border-x-2 border-b-2 border-[#c8c81e]">
          <DrawingTable />
        </div>
        <TitleBlock />
      </div>
      <div className="w-2 shrink-0 border-r-2 border-[#2bb5e8] bg-gradient-to-b from-[#b9cfea] via-[#c3d6ee] to-[#b9cfea]" />
      {/* crosshair cursor */}
      <span className="absolute top-0 left-[976px] h-[771px] w-px bg-white" />
      <span className="absolute top-[350px] left-[555px] h-px w-[842px] bg-white" />
    </main>
  );
}

/* ---------- COMMAND LINE ---------- */

function CommandLine() {
  return (
    <section className="flex h-[71px] shrink-0 border-t-[3px] border-b border-[#707070] bg-[#3f8040] font-['DejaVu_Sans_Mono',monospace] text-[12px]">
      <div className="flex w-[23px] shrink-0 flex-col items-center gap-2 border-x border-[#777] bg-gradient-to-b from-[#7d7d7d] to-[#3d3d3d] pt-1">
        <span className="h-[5px] w-[17px] bg-[repeating-linear-gradient(90deg,#aaa_0px,#aaa_2px,#666_2px,#666_3px)]" />
        <button aria-label="Close command line"><svg width="10" height="10" stroke="#fff" strokeWidth="2" aria-hidden="true" className="block"><path d="M1 1l8 8M9 1L1 9" /></svg></button>
        <button aria-label="Customize"><Svg size={14}><path d="M4 0l2 2v3L3 6 0 4c0 4 3 6 6 5l6 6c2 2 5-1 3-3L9 6c1-4-2-6-5-6z" fill={W} stroke="#333" strokeWidth=".5" /></Svg></button>
      </div>
      <div className="flex flex-1 flex-col justify-end">
        <div className="pb-[2px] pl-[2px] leading-[15px] text-black">
          <p>Command: *Cancel*</p>
          <p>Command: *Cancel*</p>
        </div>
        <label className="flex h-[22px] items-center border-t border-[#7aa07a] pl-[5px]">
          <svg width="15" height="14" aria-hidden="true"><rect width="15" height="14" rx="1" fill="#dfe3ea" /><path d="M3 4l3 3-3 3M7 10.500h5" fill="none" stroke="#333" /></svg>
          <svg width="6" height="4" className="mr-[6px] ml-1" aria-hidden="true"><path d="M0 0h6L3 4z" fill="#8c9a8c" /></svg>
          <input aria-label="Command" placeholder="Type a command" className="flex-1 bg-transparent text-[12px] italic outline-none placeholder:text-[#a9b3a9]" />
        </label>
      </div>
    </section>
  );
}

/* ---------- STATUS BAR ---------- */

function Cell({ width, children, label }) {
  return (
    <button aria-label={label} className={`flex h-[26px] shrink-0 items-center justify-center gap-2 border border-[#7b7b7b] bg-[#505050] ${width}`}>
      {children}
    </button>
  );
}

const G = "#c8c8c8";
const BLUE = "#2b95ff";

function StatusBar() {
  return (
    <footer className="flex h-[30px] shrink-0 items-start bg-[#383838] text-white">
      <div className="flex flex-1 items-start pl-[13px] text-[12px] leading-[17px]">
        <button className="h-[18px] w-[54px] rounded-b-lg border-x border-b border-[#666] bg-[#505050] text-[#bbb]">Model</button>
        <button className="h-[18px] w-[58px] rounded-b-lg border-x border-b border-[#999] bg-gradient-to-b from-[#666] to-[#8a8a8a] font-bold">25503</button>
        <button aria-label="New layout" className="ml-[6px] flex h-4 w-[22px] items-center justify-center rounded-tl-lg rounded-br-lg border border-[#666] bg-[#4c4c4c]">
          <svg width="9" height="9" stroke="#bbb" strokeWidth="2" aria-hidden="true"><path d="M4.500 0v9M0 4.500h9" /></svg>
        </button>
      </div>
      <div className="flex items-center gap-px pt-px text-[12px] whitespace-nowrap">
        <p className="flex h-[26px] w-[182px] items-center justify-end border border-[#7b7b7b] bg-[#505050] pr-[5px]">837.2895, 274.5926, 0.0000</p>
        <Cell width="w-[42px]">PAPER</Cell>
        <Cell label="Grid" width="w-[25px]"><Svg><path d="M8.500 14V2h4v4h-4" stroke={G} strokeWidth="1.500" /><rect x="4" y="11" width="5" height="4" fill={G} stroke="none" /></Svg></Cell>
        <Cell label="Dynamic input" width="w-[24px]"><Svg><path d="M4 1v7M0 4.500h8" stroke={G} strokeWidth="1.500" /><rect x="7" y="10" width="9" height="4" fill={G} stroke="none" /></Svg></Cell>
        <Cell label="Ortho and polar" width="w-[103px]">
          <Svg><path d="M2.500 2v11.500H15M2.500 9h4v4" stroke={BLUE} strokeWidth="1.500" /></Svg>
          <Svg><path d="M11 3a6 6 0 102 7M7 8h8M7 8l6-6" stroke={G} strokeWidth="1.300" /></Svg>
          <Caret />
          <Svg><path d="M1 1l14 14M9 0v16" stroke={G} /></Svg>
          <Caret />
        </Cell>
        <Cell label="Object snap" width="w-[63px]">
          <Svg><path d="M14 2L2 13h13" stroke={BLUE} strokeWidth="1.800" /><rect x="6" y="6" width="4" height="4" fill={BLUE} stroke="none" /></Svg>
          <Svg><rect x="3" y="4" width="11" height="11" stroke={BLUE} strokeWidth="1.500" /><rect x="1" y="2" width="4" height="4" fill="#1ed01e" stroke="#042" /></Svg>
          <Caret />
        </Cell>
        <Cell label="Lineweight" width="w-[25px]"><Svg><path d="M0 3h16M0 7h11M0 10.500h16M0 14h9" stroke={G} strokeWidth="2" /></Svg></Cell>
        <Cell label="Transparency" width="w-[25px]">
          <span className="h-[14px] w-[14px] border border-[#ccc] bg-[conic-gradient(#ddd_25%,#555_0_50%,#ddd_0_75%,#555_0)] bg-[length:4px_4px]" />
        </Cell>
        <Cell label="Selection cycling" width="w-[25px]"><Svg><path d="M4 0v8M0 4h8" stroke={G} /><rect x="6" y="6" width="9" height="9" fill="#8fbf7a" stroke="#4e7a3c" /></Svg></Cell>
        <Cell label="Annotation" width="w-[51px]">
          <Svg><path d="M3 5l5 2M8 7l-6 8h3l4-5 3 5h3l-4-8" fill={G} stroke={G} /><circle cx="11" cy="4" r="2.500" stroke={G} fill="#505050" /></Svg>
          <Svg><path d="M3 5l5 2M8 7l-6 8h3l4-5 3 5h3l-4-8M12 0L9 4h5l-3 4" fill={BLUE} stroke={BLUE} /></Svg>
        </Cell>
        <Cell label="Workspace" width="w-[144px]">
          <Svg size={14}><circle cx="8" cy="8" r="3.500" stroke={G} strokeWidth="3.500" /><circle cx="8" cy="8" r="6" stroke={G} strokeWidth="2.500" strokeDasharray="2.700 2" /></Svg>
          <span className="pl-1">NO ISHQ NO RISK</span>
          <Caret />
        </Cell>
        <Cell label="Monitor" width="w-[25px]"><Svg><path d="M8 1v14M1 8h14" stroke={G} strokeWidth="2" /></Svg></Cell>
        <Cell label="Quick properties" width="w-[25px]"><Svg size={14}><rect x="3.500" y="2.500" width="9" height="12" stroke={G} /><path d="M5 6h6M5 9h6M5 12h6" stroke={G} strokeDasharray="2 1" /></Svg></Cell>
        <Cell label="Lock UI" width="w-[41px]"><Svg><path d="M7 12H1V2h13v4M1 4h13" stroke={G} strokeWidth="1.300" /><path d="M11 10V8a2 2 0 014 0" stroke={G} /><rect x="7" y="10" width="7" height="5" fill={G} stroke="none" /></Svg><Caret /></Cell>
        <Cell label="Isolate objects" width="w-[24px]"><Svg><rect x="1" y="1" width="6" height="6" stroke={G} /><circle cx="12" cy="7" r="3" stroke={G} /><path d="M7 9l-4 6h8z" stroke={G} /></Svg></Cell>
        <Cell label="Hardware acceleration" width="w-[27px]"><Svg size={18}><circle cx="8" cy="8" r="7" fill="#0c4a94" stroke={BLUE} strokeWidth="1.500" /><path d="M7 9l4-4" stroke={BLUE} strokeWidth="1.500" /></Svg></Cell>
        <Cell label="Tray" width="w-[70px]">
          <Svg size={18}><rect x="0" y="1" width="15" height="13" fill="#fff" stroke="#333" /><path d="M1 13C4 0 7 2 8 7s4 6 6 1" stroke="#222" /><path d="M12 8l4 8H8z" fill="#f0701c" stroke="#a33c00" strokeWidth=".5" /></Svg>
          <Svg size={14}><path d="M4 7V2h8v5" stroke={W} /><rect x="1" y="7" width="14" height="6" fill="#ddd" stroke="#444" /><path d="M3 11h10" stroke="#f0701c" strokeWidth="2" /></Svg>
          <Svg><path d="M1 1h6v5H1z" fill="#fff" stroke="#37c" /><path d="M3 6h12v7H3z" fill="#f3d35c" stroke="#37c" /><path d="M6 11l3 3 6-6" stroke="#3fc01c" strokeWidth="2.200" /></Svg>
        </Cell>
        <Cell label="Clean screen" width="w-[50px]">
          <Svg><path d="M1 2h14v12H1zM9 5h3v3M12 5L9 8M4 8v3h3M4 11l3-3" stroke={G} strokeWidth="1.300" /></Svg>
          <Svg><path d="M0 3h16M0 8h16M0 13h16" stroke={G} strokeWidth="2" /></Svg>
        </Cell>
      </div>
    </footer>
  );
}

/* ---------- WINDOWS TASKBAR ---------- */

const apps = [
  ["File Explorer", true, <><path d="M2 5h8l2 2h12v17H2z" fill="#f5c445" /><path d="M2 9h22v14H2z" fill="#fde394" /><path d="M6 24v-9h14v9h-3v-5H9v5z" fill="#1fa9ea" /></>],
  ["AutoCAD", true, <><rect x="0" y="0" width="26" height="26" fill="#fbe9e4" /><path d="M10 3h6l7 20h-5l-2-5-7 1-2 5H3z" fill="#b61e24" /><path d="M13 9l2 5-4 1z" fill="#fbe9e4" /></>],
  ["Excel", true, <><path d="M12 4h12v18H12z" fill="#fff" /><path d="M14 7h8M14 10h8M14 13h8M14 16h8M14 19h8" stroke="#1d7044" strokeWidth="1.500" /><path d="M1 4l14-2v22L1 22z" fill="#1d7044" /><path d="M4 9l6 8M10 9l-6 8" stroke="#fff" strokeWidth="2" /></>],
  ["Edge", true, <path fillRule="evenodd" d="M2 12C3 6 8 2 14 2c7 0 11 6 10 13H9c0 6 8 7 13 4v4C12 28 3 23 5 14c1-4 4-6 6-7-4 0-7 2-9 5zM9 11h9c0-6-8-6-9 0z" fill="#0c78d6" />],
  ["Word", true, <><path d="M12 4h12v18H12z" fill="#fff" /><path d="M15 7h8M15 10h8M15 13h8M15 16h8M15 19h8" stroke="#2a579a" strokeWidth="1.200" /><path d="M1 4l14-2v22L1 22z" fill="#2a579a" /><path d="M3 9l2 8 3-7 3 7 2-8" stroke="#fff" strokeWidth="1.800" fill="none" /></>],
  ["Chrome", false, <><circle cx="13" cy="13" r="11" fill="#fbc116" /><path d="M13 13L3.500 7.500A11 11 0 0123 8z" fill="#e23b2e" /><path d="M13 13L3.500 7.500A11 11 0 0012 24z" fill="#2fa24c" /><circle cx="13" cy="13" r="5.500" fill="#fff" /><circle cx="13" cy="13" r="4.300" fill="#3b7ded" /></>],
  ["Acrobat Reader", false, <><rect x="3" y="3" width="20" height="20" fill="#2b0606" stroke="#e8200f" strokeWidth="2" /><path d="M7 19c5-4 6-9 6-12 0 6 4 9 7 9-5-1-9 0-13 3z" fill="none" stroke="#fff" strokeWidth="1.300" /></>],
  ["Sticky Notes", true, <><path d="M3 3l10 2-3 13-9-2z" fill="#a6dba0" /><path d="M6 6l12 1-2 14-11-3z" fill="#9fd0f2" /><path d="M12 8l13 1-3 14-12-3z" fill="#fbe27a" /></>],
  ["Outlook", true, <><path d="M12 7h13v12H12z" fill="#fff" /><path d="M13 8l6 6 6-6" stroke="#0f72c5" strokeWidth="2" fill="none" /><path d="M1 4l14-2v22L1 22z" fill="#0f72c5" /><ellipse cx="8" cy="13" rx="3" ry="4" fill="none" stroke="#fff" strokeWidth="2" /></>],
  ["Calculator", false, <><rect x="4" y="1" width="18" height="24" fill="#fff" /><path d="M6 5h14" stroke="#000" strokeWidth="4" /><path d="M7 11h12M7 16h12M7 21h12" stroke="#000" strokeWidth="3" strokeDasharray="3 2" /></>],
  ["TeamViewer", false, <path d="M22 7H11V4L4 9l7 5v-3h6M5 15h10v-3l8 6-8 5v-3H5z" fill="none" stroke="#fff" strokeWidth="1.200" />],
];

function Taskbar() {
  return (
    <div className="flex h-10 shrink-0 items-stretch bg-black text-white">
      <button aria-label="Start" className="flex w-12 shrink-0 items-center justify-center">
        <svg width="16" height="16" fill="#fff" aria-hidden="true"><path d="M0 2l7-1v6.500H0zM8 1l8-1v7.500H8zM0 8.500h7V15l-7-1zM8 8.500h8V16l-8-1z" /></svg>
      </button>
      <input aria-label="Search" placeholder="Search the web and Windows" className="w-[344px] shrink-0 bg-[#323232] px-3 text-[14px] outline-none placeholder:text-[#a0a0a0]" />
      <button aria-label="Task view" className="flex w-12 items-center justify-center">
        <svg width="20" height="16" fill="none" stroke="#fff" aria-hidden="true"><path d="M4.500 1.500h11v13h-11zM2.500 3.500h-2v9h2M17.500 3.500h2v9h-2" /></svg>
      </button>
      <span className="mr-[13px] ml-[5px] h-4 w-[3px] self-center border-x border-[#555]" />
      {apps.map(([name, running, art]) => (
        <button
          key={name}
          aria-label={name}
          className={`flex w-[49px] items-center justify-center ${name === "AutoCAD" ? "bg-[#323232]" : ""} relative`}
        >
          <svg width="24" height="24" viewBox="0 0 26 26" aria-hidden="true">{art}</svg>
          {running && <span className="absolute inset-x-1 bottom-0 h-[2px] bg-[#76b9ed]" />}
        </button>
      ))}
      <span className="flex-1" />
      <span className="mr-[10px] h-4 w-[3px] self-center border-x border-[#555]" />
      <div className="flex items-center text-[12px]">
        <button>ELV-Resources</button>
        <button className="mb-[10px] ml-2 flex items-center gap-[5px]">
          <svg width="14" height="17" aria-hidden="true"><path d="M0 0h12v17H0z" fill="#ffe08a" /><path d="M12 10h2v7h-4z" fill="#f0c44e" /></svg>
          Access-Control
        </button>
        <button aria-label="More" className="mb-5 ml-[17px]"><svg width="9" height="7" fill="none" stroke="#fff" strokeWidth="1.300"><path d="M1 0l3 3-3 3M5 0l3 3-3 3" /></svg></button>
        <button aria-label="Hidden icons" className="ml-[10px]"><svg width="13" height="8" fill="none" stroke="#fff" strokeWidth="1.200"><path d="M1 7l5-5 5 5" /></svg></button>
        <button aria-label="Network" className="ml-[8px]"><Svg size={18}><path d="M4 2h11v8H5M9 10v4M6 14.500h6M1 2h3v4H1zM2.500 6v8h3" stroke="#fff" /></Svg></button>
        <button aria-label="Volume" className="ml-[8px]"><Svg><path d="M1 6h3l3-3v10l-3-3H1zM10 6l4 4M14 6l-4 4" stroke="#fff" strokeWidth="1.200" /></Svg></button>
        <button aria-label="Notifications" className="ml-2"><Svg><path d="M0 1h16v11H10l-2 3-2-3H0z" fill="#fff" stroke="none" /><path d="M3 4h10M3 6.500h10M3 9h7" stroke="#000" /></Svg></button>
        <div className="mr-[14px] ml-[15px] text-center leading-[17px]">
          <p>11:18 AM</p>
          <p>25-Jun-18</p>
        </div>
      </div>
      <span className="mr-[3px] w-px bg-[#555]" />
    </div>
  );
}

export default function App() {
  const [tab, setTab] = useState("DRAWINGS LIST*");

  return (
    <div className="flex h-screen flex-col overflow-hidden bg-[#383838] font-['Open_Sans',sans-serif]">
      <Header />
      <FileTabs active={tab} onPick={setTab} />
      <Toolbars />
      <Canvas />
      <CommandLine />
      <StatusBar />
      <Taskbar />
    </div>
  );
}
